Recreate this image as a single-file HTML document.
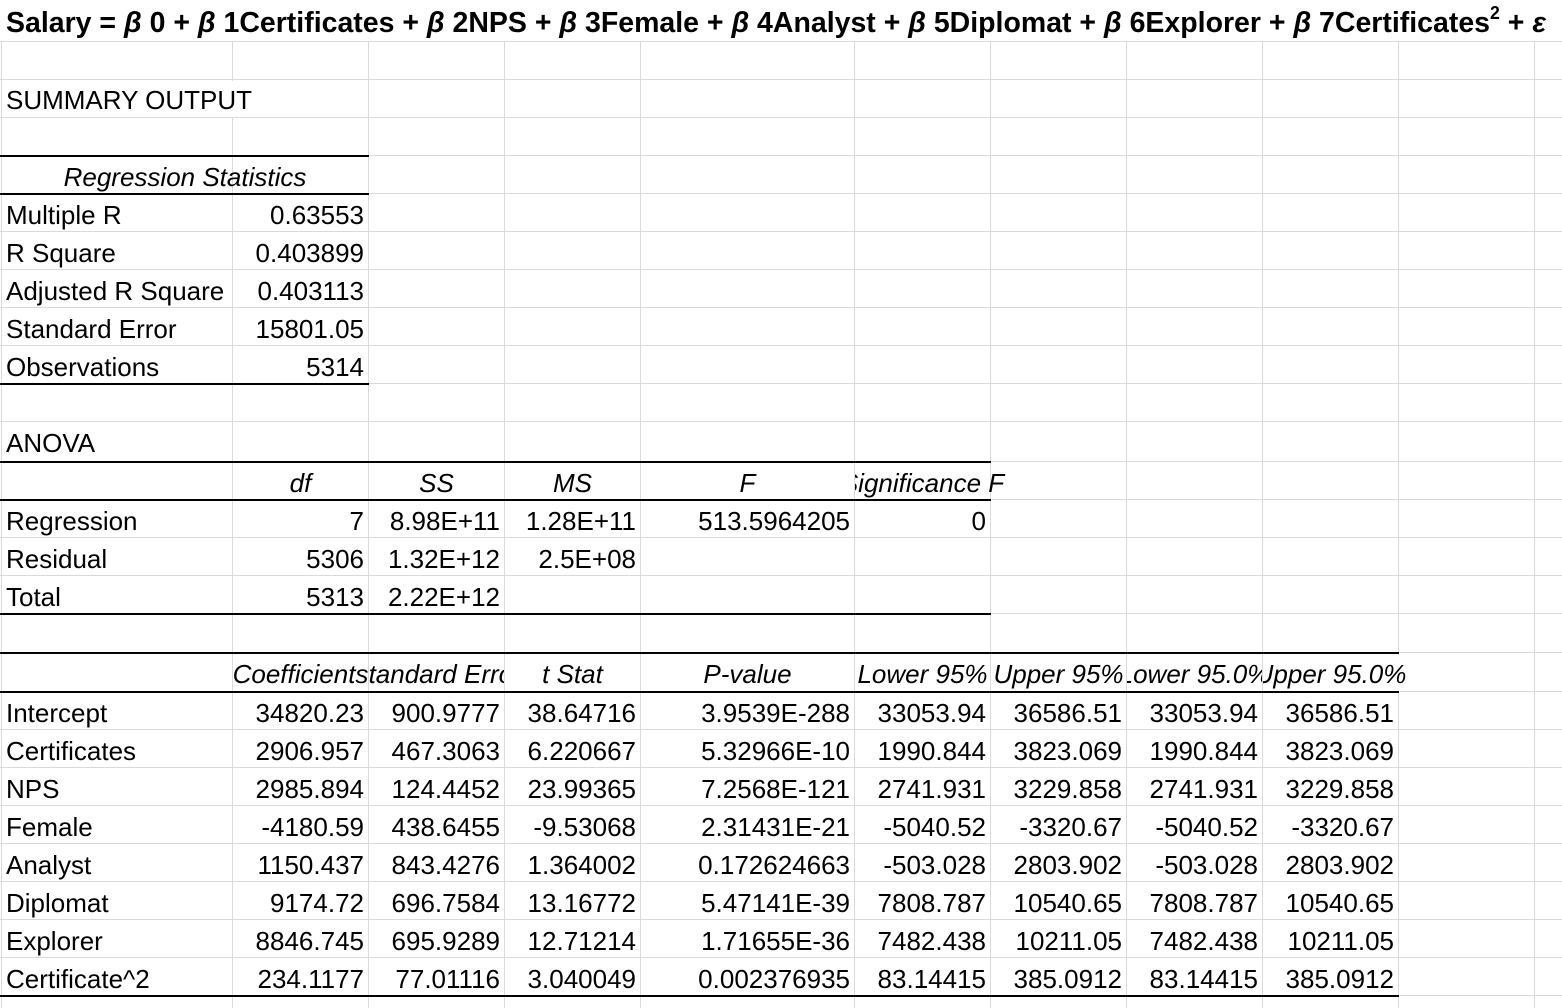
<!DOCTYPE html>
<html><head><meta charset="utf-8"><style>
html,body{margin:0;padding:0;background:#fff;}
body{width:1562px;height:1008px;position:relative;overflow:hidden;font-family:"Liberation Sans",sans-serif;color:#000;}
.h{position:absolute;left:0;width:1562px;height:1px;background:#dadada;}
.v{position:absolute;top:42px;width:1px;height:966px;background:#dadada;}
.b{position:absolute;height:2px;background:#000;}
.t{position:absolute;height:36px;line-height:38px;font-size:26px;white-space:nowrap;box-sizing:border-box;}
.l{padding-left:4px;text-align:left;}
.r{padding-right:4px;text-align:right;}
.c{display:flex;justify-content:center;}
.i{font-style:italic;}
.clip{overflow:hidden;background:#fff;}
</style></head><body>

<svg style="position:absolute;left:0;top:0" width="1562" height="42">
<text x="6" y="32" font-family="Liberation Sans, sans-serif" font-weight="bold" font-size="29" textLength="1540" lengthAdjust="spacingAndGlyphs">Salary = <tspan font-style="italic">β</tspan> 0 + <tspan font-style="italic">β</tspan> 1Certificates + <tspan font-style="italic">β</tspan> 2NPS + <tspan font-style="italic">β</tspan> 3Female + <tspan font-style="italic">β</tspan> 4Analyst + <tspan font-style="italic">β</tspan> 5Diplomat + <tspan font-style="italic">β</tspan> 6Explorer + <tspan font-style="italic">β</tspan> 7Certificates<tspan font-size="18" dy="-13">2</tspan><tspan dy="13"> + </tspan><tspan font-style="italic">ε</tspan></text>
</svg>

<div class="h" style="top:41px"></div>
<div class="h" style="top:79px"></div>
<div class="h" style="top:117px"></div>
<div class="h" style="top:155px"></div>
<div class="h" style="top:193px"></div>
<div class="h" style="top:231px"></div>
<div class="h" style="top:269px"></div>
<div class="h" style="top:307px"></div>
<div class="h" style="top:345px"></div>
<div class="h" style="top:383px"></div>
<div class="h" style="top:421px"></div>
<div class="h" style="top:461px"></div>
<div class="h" style="top:499px"></div>
<div class="h" style="top:537px"></div>
<div class="h" style="top:575px"></div>
<div class="h" style="top:613px"></div>
<div class="h" style="top:652px"></div>
<div class="h" style="top:691px"></div>
<div class="h" style="top:729px"></div>
<div class="h" style="top:767px"></div>
<div class="h" style="top:805px"></div>
<div class="h" style="top:843px"></div>
<div class="h" style="top:881px"></div>
<div class="h" style="top:919px"></div>
<div class="h" style="top:957px"></div>
<div class="h" style="top:995px"></div>
<div class="v" style="left:1px"></div>
<div class="v" style="left:232px"></div>
<div class="v" style="left:368px"></div>
<div class="v" style="left:504px"></div>
<div class="v" style="left:640px"></div>
<div class="v" style="left:854px"></div>
<div class="v" style="left:990px"></div>
<div class="v" style="left:1126px"></div>
<div class="v" style="left:1262px"></div>
<div class="v" style="left:1398px"></div>
<div class="v" style="left:1534px"></div>

<div class="t l" style="left:2px;top:81px;width:300px;background:#fff">SUMMARY OUTPUT</div>
<div class="t c i" style="left:2px;top:158px;width:366px"><span>Regression Statistics</span></div>

<div class="t l" style="left:2px;top:196px;width:229px">Multiple R</div>
<div class="t r" style="left:233px;top:196px;width:135px">0.63553</div>
<div class="t l" style="left:2px;top:234px;width:229px">R Square</div>
<div class="t r" style="left:233px;top:234px;width:135px">0.403899</div>
<div class="t l" style="left:2px;top:272px;width:229px">Adjusted R Square</div>
<div class="t r" style="left:233px;top:272px;width:135px">0.403113</div>
<div class="t l" style="left:2px;top:310px;width:229px">Standard Error</div>
<div class="t r" style="left:233px;top:310px;width:135px">15801.05</div>
<div class="t l" style="left:2px;top:348px;width:229px">Observations</div>
<div class="t r" style="left:233px;top:348px;width:135px">5314</div>

<div class="t l" style="left:2px;top:424px;width:200px">ANOVA</div>
<div class="t c i" style="left:233px;top:464px;width:135px"><span>df</span></div>
<div class="t c i" style="left:369px;top:464px;width:135px"><span>SS</span></div>
<div class="t c i" style="left:505px;top:464px;width:135px"><span>MS</span></div>
<div class="t c i" style="left:641px;top:464px;width:213px"><span>F</span></div>
<div class="t i" style="left:855px;top:464px;width:170px;overflow:hidden"><div class="c" style="width:135px;height:36px"><span>Significance F</span></div></div>

<div class="t l" style="left:2px;top:502px;width:229px">Regression</div>
<div class="t r" style="left:233px;top:502px;width:135px">7</div>
<div class="t r" style="left:369px;top:502px;width:135px">8.98E+11</div>
<div class="t r" style="left:505px;top:502px;width:135px">1.28E+11</div>
<div class="t r" style="left:641px;top:502px;width:213px">513.5964205</div>
<div class="t r" style="left:855px;top:502px;width:135px">0</div>
<div class="t l" style="left:2px;top:540px;width:229px">Residual</div>
<div class="t r" style="left:233px;top:540px;width:135px">5306</div>
<div class="t r" style="left:369px;top:540px;width:135px">1.32E+12</div>
<div class="t r" style="left:505px;top:540px;width:135px">2.5E+08</div>
<div class="t l" style="left:2px;top:578px;width:229px">Total</div>
<div class="t r" style="left:233px;top:578px;width:135px">5313</div>
<div class="t r" style="left:369px;top:578px;width:135px">2.22E+12</div>

<div class="t c i" style="left:233px;top:655px;width:135px"><span>Coefficients</span></div>
<div class="t c i clip" style="left:369px;top:655px;width:135px"><span>Standard Error</span></div>
<div class="t c i" style="left:505px;top:655px;width:135px"><span>t Stat</span></div>
<div class="t c i" style="left:641px;top:655px;width:213px"><span>P-value</span></div>
<div class="t c i" style="left:855px;top:655px;width:135px"><span>Lower 95%</span></div>
<div class="t c i clip" style="left:991px;top:655px;width:135px"><span>Upper 95%</span></div>
<div class="t c i clip" style="left:1127px;top:655px;width:135px"><span>Lower 95.0%</span></div>
<div class="t i" style="left:1263px;top:655px;width:170px;overflow:hidden;background:#fff"><div class="c" style="width:135px;height:36px"><span>Upper 95.0%</span></div></div>

<div class="t l" style="left:2px;top:694px;width:229px">Intercept</div>
<div class="t r" style="left:233px;top:694px;width:135px">34820.23</div>
<div class="t r" style="left:369px;top:694px;width:135px">900.9777</div>
<div class="t r" style="left:505px;top:694px;width:135px">38.64716</div>
<div class="t r" style="left:641px;top:694px;width:213px">3.9539E-288</div>
<div class="t r" style="left:855px;top:694px;width:135px">33053.94</div>
<div class="t r" style="left:991px;top:694px;width:135px">36586.51</div>
<div class="t r" style="left:1127px;top:694px;width:135px">33053.94</div>
<div class="t r" style="left:1263px;top:694px;width:135px">36586.51</div>

<div class="t l" style="left:2px;top:732px;width:229px">Certificates</div>
<div class="t r" style="left:233px;top:732px;width:135px">2906.957</div>
<div class="t r" style="left:369px;top:732px;width:135px">467.3063</div>
<div class="t r" style="left:505px;top:732px;width:135px">6.220667</div>
<div class="t r" style="left:641px;top:732px;width:213px">5.32966E-10</div>
<div class="t r" style="left:855px;top:732px;width:135px">1990.844</div>
<div class="t r" style="left:991px;top:732px;width:135px">3823.069</div>
<div class="t r" style="left:1127px;top:732px;width:135px">1990.844</div>
<div class="t r" style="left:1263px;top:732px;width:135px">3823.069</div>

<div class="t l" style="left:2px;top:770px;width:229px">NPS</div>
<div class="t r" style="left:233px;top:770px;width:135px">2985.894</div>
<div class="t r" style="left:369px;top:770px;width:135px">124.4452</div>
<div class="t r" style="left:505px;top:770px;width:135px">23.99365</div>
<div class="t r" style="left:641px;top:770px;width:213px">7.2568E-121</div>
<div class="t r" style="left:855px;top:770px;width:135px">2741.931</div>
<div class="t r" style="left:991px;top:770px;width:135px">3229.858</div>
<div class="t r" style="left:1127px;top:770px;width:135px">2741.931</div>
<div class="t r" style="left:1263px;top:770px;width:135px">3229.858</div>

<div class="t l" style="left:2px;top:808px;width:229px">Female</div>
<div class="t r" style="left:233px;top:808px;width:135px">-4180.59</div>
<div class="t r" style="left:369px;top:808px;width:135px">438.6455</div>
<div class="t r" style="left:505px;top:808px;width:135px">-9.53068</div>
<div class="t r" style="left:641px;top:808px;width:213px">2.31431E-21</div>
<div class="t r" style="left:855px;top:808px;width:135px">-5040.52</div>
<div class="t r" style="left:991px;top:808px;width:135px">-3320.67</div>
<div class="t r" style="left:1127px;top:808px;width:135px">-5040.52</div>
<div class="t r" style="left:1263px;top:808px;width:135px">-3320.67</div>

<div class="t l" style="left:2px;top:846px;width:229px">Analyst</div>
<div class="t r" style="left:233px;top:846px;width:135px">1150.437</div>
<div class="t r" style="left:369px;top:846px;width:135px">843.4276</div>
<div class="t r" style="left:505px;top:846px;width:135px">1.364002</div>
<div class="t r" style="left:641px;top:846px;width:213px">0.172624663</div>
<div class="t r" style="left:855px;top:846px;width:135px">-503.028</div>
<div class="t r" style="left:991px;top:846px;width:135px">2803.902</div>
<div class="t r" style="left:1127px;top:846px;width:135px">-503.028</div>
<div class="t r" style="left:1263px;top:846px;width:135px">2803.902</div>

<div class="t l" style="left:2px;top:884px;width:229px">Diplomat</div>
<div class="t r" style="left:233px;top:884px;width:135px">9174.72</div>
<div class="t r" style="left:369px;top:884px;width:135px">696.7584</div>
<div class="t r" style="left:505px;top:884px;width:135px">13.16772</div>
<div class="t r" style="left:641px;top:884px;width:213px">5.47141E-39</div>
<div class="t r" style="left:855px;top:884px;width:135px">7808.787</div>
<div class="t r" style="left:991px;top:884px;width:135px">10540.65</div>
<div class="t r" style="left:1127px;top:884px;width:135px">7808.787</div>
<div class="t r" style="left:1263px;top:884px;width:135px">10540.65</div>

<div class="t l" style="left:2px;top:922px;width:229px">Explorer</div>
<div class="t r" style="left:233px;top:922px;width:135px">8846.745</div>
<div class="t r" style="left:369px;top:922px;width:135px">695.9289</div>
<div class="t r" style="left:505px;top:922px;width:135px">12.71214</div>
<div class="t r" style="left:641px;top:922px;width:213px">1.71655E-36</div>
<div class="t r" style="left:855px;top:922px;width:135px">7482.438</div>
<div class="t r" style="left:991px;top:922px;width:135px">10211.05</div>
<div class="t r" style="left:1127px;top:922px;width:135px">7482.438</div>
<div class="t r" style="left:1263px;top:922px;width:135px">10211.05</div>

<div class="t l" style="left:2px;top:960px;width:229px">Certificate^2</div>
<div class="t r" style="left:233px;top:960px;width:135px">234.1177</div>
<div class="t r" style="left:369px;top:960px;width:135px">77.01116</div>
<div class="t r" style="left:505px;top:960px;width:135px">3.040049</div>
<div class="t r" style="left:641px;top:960px;width:213px">0.002376935</div>
<div class="t r" style="left:855px;top:960px;width:135px">83.14415</div>
<div class="t r" style="left:991px;top:960px;width:135px">385.0912</div>
<div class="t r" style="left:1127px;top:960px;width:135px">83.14415</div>
<div class="t r" style="left:1263px;top:960px;width:135px">385.0912</div>

<div class="b" style="left:0;top:155px;width:369px"></div>
<div class="b" style="left:0;top:193px;width:369px"></div>
<div class="b" style="left:0;top:383px;width:369px"></div>
<div class="b" style="left:0;top:461px;width:991px"></div>
<div class="b" style="left:0;top:499px;width:991px"></div>
<div class="b" style="left:0;top:613px;width:991px"></div>
<div class="b" style="left:0;top:652px;width:1399px"></div>
<div class="b" style="left:0;top:691px;width:1399px"></div>
<div class="b" style="left:0;top:995px;width:1399px"></div>

</body></html>
